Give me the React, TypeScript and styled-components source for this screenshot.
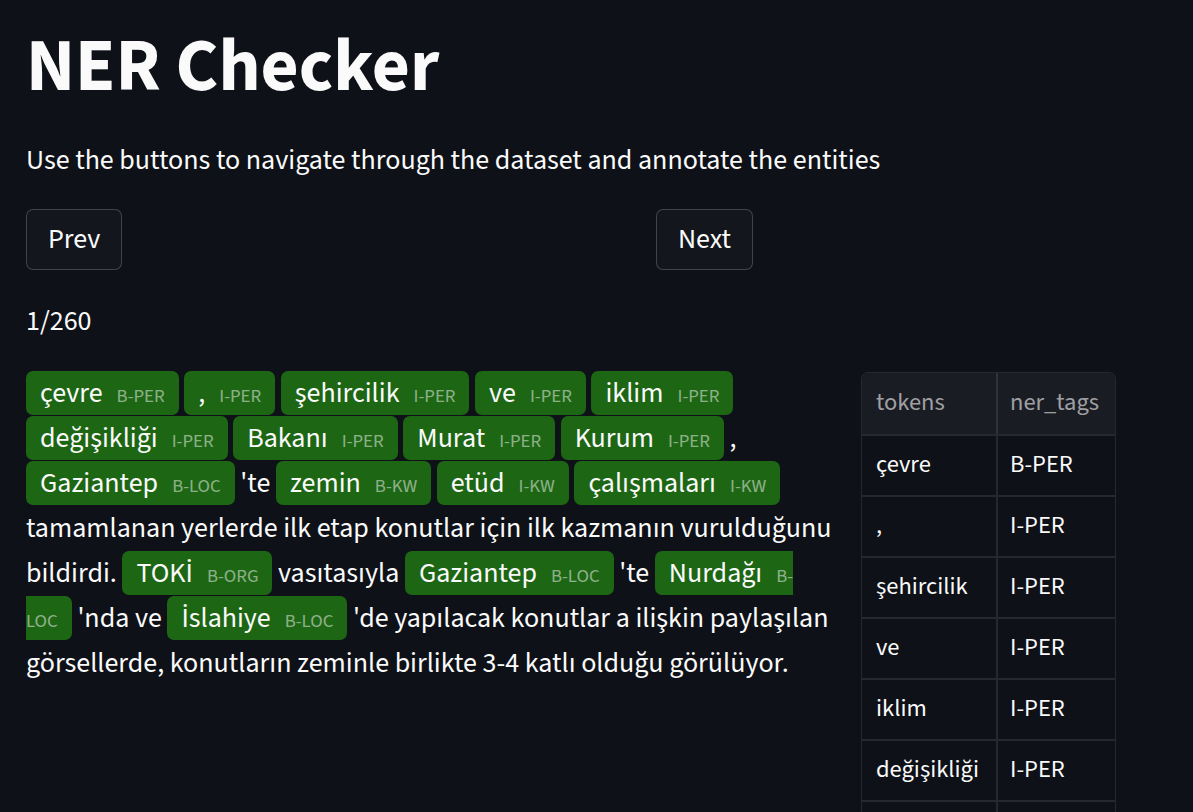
import React from "react";
import styled, { createGlobalStyle } from "styled-components";

const GlobalStyle = createGlobalStyle`
  html, body { margin: 0; padding: 0; background: #0e1117; }
  body {
    color: #fafafa;
    font-family: "Source Sans 3", "Source Sans Pro", Lato, "Noto Sans", sans-serif;
    font-size: 28px;
    line-height: 1.6;
    -webkit-font-smoothing: antialiased;
  }
  #root { height: 812px; overflow: hidden; }
`;

const Page = styled.main`
  padding: 0 26px;
  display: flex;
  flex-direction: column;
`;

const Title = styled.h1`
  margin: 0;
  padding: 23px 0 0;
  font-size: 73.8px;
  font-weight: 700;
  line-height: 88px;
`;

const Lead = styled.p`
  margin: 27px 0 0;
  font-size: 28px;
  line-height: 1.6;
`;

const ButtonRow = styled.div`
  display: grid;
  grid-template-columns: 630px auto;
  margin-top: 26px;
  justify-items: start;
`;

const NavButton = styled.button`
  height: 61px;
  padding: 0 21px;
  border: 1px solid rgba(250, 250, 250, 0.2);
  border-radius: 7px;
  background: #13161d;
  color: #fafafa;
  font-family: inherit;
  font-size: 28px;
  line-height: 1;
  cursor: pointer;
`;

const Counter = styled.p`
  margin: 29px 0 0;
  font-size: 28px;
  line-height: 1.6;
`;

const Columns = styled.div`
  display: grid;
  grid-template-columns: 812px 305px;
  column-gap: 23px;
  margin-top: 24px;
  align-items: start;
`;

const Annotated = styled.div`
  margin-top: 3px;
  font-size: 28px;
  line-height: 45px;
`;

const Tag = styled.span<{ $bg: string }>`
  background: ${(p) => p.$bg};
  border-radius: 7px;
  padding: 2px 14px;
  overflow: hidden;
  -webkit-box-decoration-break: slice;
  box-decoration-break: slice;
`;

const TagLabel = styled.span`
  font-size: 0.67em;
  line-height: 1;
  opacity: 0.5;
  padding-left: 14px;
  text-transform: uppercase;
`;

const TableFrame = styled.div`
  width: 253px;
  margin-top: 4px;
  border: 1px solid rgba(250, 250, 250, 0.1);
  border-radius: 7px;
  overflow: hidden;
`;

const Table = styled.table`
  width: 100%;
  border-collapse: separate;
  border-spacing: 0;
  font-size: 24.5px;
  line-height: 1.2;
  table-layout: fixed;
`;

const Row = styled.tr`
  height: 61px;
`;

const HeadCell = styled.th<{ $w: number }>`
  box-sizing: border-box;
  width: ${(p) => p.$w}px;
  padding: 0 14px;
  background: #1a1c24;
  color: rgba(250, 250, 250, 0.6);
  font-weight: 400;
  text-align: left;
  white-space: nowrap;
  & + & { border-left: 2px solid rgba(250, 250, 250, 0.1); padding-left: 12px; }
`;

const Cell = styled.td`
  box-sizing: border-box;
  padding: 0 14px;
  white-space: nowrap;
  overflow: hidden;
  border-top: 2px solid rgba(250, 250, 250, 0.1);
  & + & { border-left: 2px solid rgba(250, 250, 250, 0.1); padding-left: 12px; }
`;

type Piece = string | [string, string];

const GREEN = "#1d6614";

const pieces: Piece[] = [
  ["çevre", "B-PER"], " ",
  [",", "I-PER"], " ",
  ["şehircilik", "I-PER"], " ",
  ["ve", "I-PER"], " ",
  ["iklim", "I-PER"], " ",
  ["değişikliği", "I-PER"], " ",
  ["Bakanı", "I-PER"], " ",
  ["Murat", "I-PER"], " ",
  ["Kurum", "I-PER"], " , ",
  ["Gaziantep", "B-LOC"], " 'te ",
  ["zemin", "B-KW"], " ",
  ["etüd", "I-KW"], " ",
  ["çalışmaları", "I-KW"],
  " tamamlanan yerlerde ilk etap konutlar için ilk kazmanın vurulduğunu bildirdi. ",
  ["TOKİ", "B-ORG"], " vasıtasıyla ",
  ["Gaziantep", "B-LOC"], " 'te ",
  ["Nurdağı", "B-LOC"], " 'nda ve ",
  ["İslahiye", "B-LOC"],
  " 'de yapılacak konutlar a ilişkin paylaşılan görsellerde, konutların zeminle birlikte 3-4 katlı olduğu görülüyor.",
];

const rows: [string, string][] = [
  ["çevre", "B-PER"],
  [",", "I-PER"],
  ["şehircilik", "I-PER"],
  ["ve", "I-PER"],
  ["iklim", "I-PER"],
  ["değişikliği", "I-PER"],
  ["Bakanı", "I-PER"],
  ["Murat", "I-PER"],
  ["Kurum", "I-PER"],
];

export default function App() {
  return (
    <>
      <GlobalStyle />
      <Page>
        <Title>NER Checker</Title>
        <Lead>Use the buttons to navigate through the dataset and annotate the entities</Lead>
        <ButtonRow>
          <NavButton>Prev</NavButton>
          <NavButton>Next</NavButton>
        </ButtonRow>
        <Counter>1/260</Counter>
        <Columns>
          <Annotated>
            {pieces.map((p, i) =>
              typeof p === "string" ? (
                <React.Fragment key={i}>{p}</React.Fragment>
              ) : (
                <Tag key={i} $bg={GREEN}>
                  {p[0]}
                  <TagLabel>{p[1]}</TagLabel>
                </Tag>
              )
            )}
          </Annotated>
          <TableFrame>
            <Table>
              <thead>
                <Row>
                  <HeadCell $w={134}>tokens</HeadCell>
                  <HeadCell $w={119}>ner_tags</HeadCell>
                </Row>
              </thead>
              <tbody>
                {rows.map(([t, n], i) => (
                  <Row key={i}>
                    <Cell>{t}</Cell>
                    <Cell>{n}</Cell>
                  </Row>
                ))}
              </tbody>
            </Table>
          </TableFrame>
        </Columns>
      </Page>
    </>
  );
}
